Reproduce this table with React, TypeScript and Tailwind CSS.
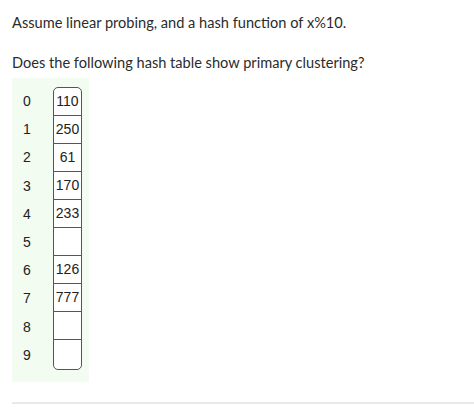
import React from "react";

const rows: (string | null)[] = ["110", "250", "61", "170", "233", null, "126", "777", null, null];

export default function App() {
  return (
    <div className="w-[474px] h-[410px] bg-white overflow-hidden pl-[12px]">
      <div className="pt-[14px] font-['Lato',sans-serif] text-[14.6px] leading-[normal] text-[#2b2b2b]">
        <p>Assume linear probing, and a hash function of x%10.</p>
        <p className="mt-[22.5px]">Does the following hash table show primary clustering?</p>
      </div>
      <div className="mt-[7px] w-[77px] h-[304px] bg-[#f2fcf0] pt-[9px] pl-[1px] flex font-['Liberation_Sans',Arial,sans-serif] text-[14px] text-[#222]">
        <div className="w-[28px] flex flex-col pt-[1px]">
          {rows.map((_, i) => (
            <div key={i} className="h-[28.2px] flex items-center justify-center">
              {i}
            </div>
          ))}
        </div>
        <div className="ml-[12px] w-[29px] h-[283px] border border-[#555] rounded-[5px] bg-white flex flex-col overflow-hidden">
          {rows.map((v, i) => (
            <div
              key={i}
              className={
                "h-[28.1px] shrink-0 flex items-center justify-center " +
                (i < rows.length - 1 ? "border-b border-[#555]" : "")
              }
            >
              {v ?? ""}
            </div>
          ))}
        </div>
      </div>
      <div className="mt-[20px] h-[2px] bg-[#e8e8e8]" />
    </div>
  );
}
